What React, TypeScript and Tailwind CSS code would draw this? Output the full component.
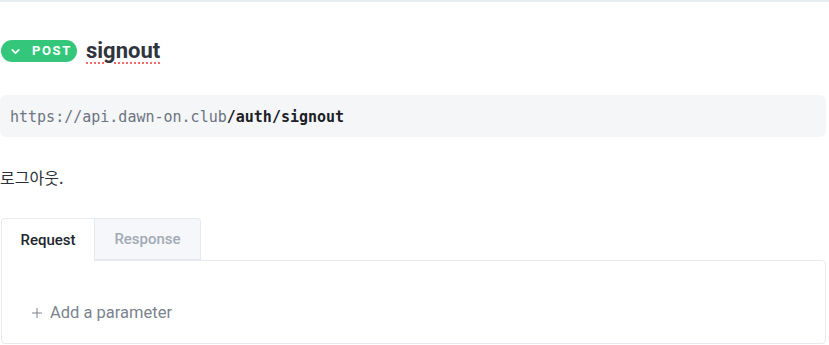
import { ChevronDown, Plus } from "lucide-react"

export default function App() {
  return (
    <div className="w-[829px] h-[345px] overflow-hidden bg-white border-t-2 border-[#e8edf3] font-['Roboto','Liberation_Sans',sans-serif] text-[#2c3038]">
      <div className="pr-[3px]">
        {/* Title */}
        <div className="mt-[38px] flex items-center gap-[9px] pl-[1px]">
          <span className="inline-flex h-[22px] w-[76px] items-center rounded-full bg-[#34c77b] pl-[8px] text-white">
            <ChevronDown size={13} strokeWidth={3} />
            <span className="ml-[10px] text-[13px] font-bold tracking-[1.6px]">POST</span>
          </span>
          <h2 className="text-[22px] font-bold leading-none text-[#2f343d] underline decoration-dotted decoration-[#f26b6b] decoration-[1.5px] underline-offset-[4px]">
            signout
          </h2>
        </div>

        {/* Endpoint */}
        <div className="mt-[33px] flex h-[42px] items-center rounded-md bg-[#f5f6f8] pl-[10px] pt-[2px] font-['DejaVu_Sans_Mono',monospace] text-[15px]">
          <span className="text-[#6b7480]">https://api.dawn-on.club</span>
          <span className="font-bold text-[#1c2027]">/auth/signout</span>
        </div>

        <p className="mt-[32px] text-[16px] leading-none text-[#2c3038] font-['Noto_Sans_CJK_KR',sans-serif]">
          로그아웃.
        </p>

        {/* Tabs */}
        <div className="mt-[33px] ml-[1px]">
          <div className="flex">
            <button className="relative z-10 -mb-px h-[43px] w-[94px] rounded-tl-[4px] border border-b-0 border-[#e6e9ee] bg-white text-[15px] font-medium text-[#22262d]">
              Request
            </button>
            <button className="h-[42px] w-[106px] rounded-tr-[4px] border border-l-0 border-[#e6e9ee] bg-[#f5f7fa] text-[15px] font-medium text-[#a2aab5]">
              Response
            </button>
          </div>
          <div className="h-[84px] rounded-b-[4px] rounded-tr-[4px] border border-[#e6e9ee] bg-white px-[29px] pt-[40px]">
            <div className="flex items-center gap-[5px] text-[16.5px] text-[#7b838e]">
              <Plus size={16} strokeWidth={1.5} className="-ml-[2px]" />
              <span>Add a parameter</span>
            </div>
          </div>
        </div>
      </div>
    </div>
  )
}
